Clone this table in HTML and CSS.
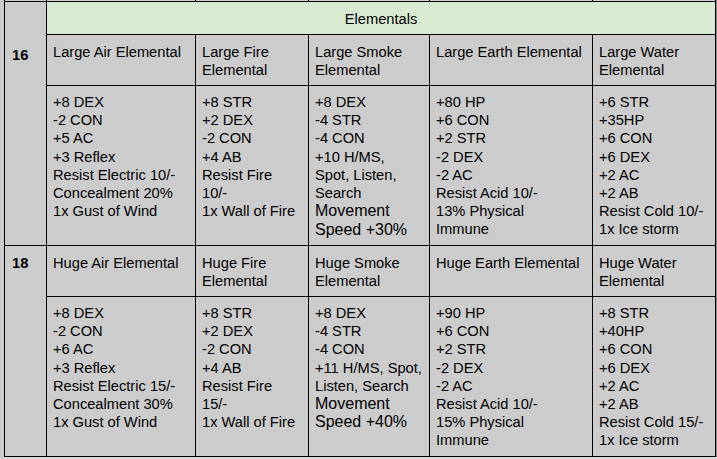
FILE: index.html
```html
<!DOCTYPE html>
<html>
<head>
<meta charset="utf-8">
<link rel="stylesheet" href="styles.css">
</head>
<body>
<div class="sheet">
  <div class="cell top c1"></div>
  <div class="cell top"></div>
  <div class="cell top"></div>
  <div class="cell top"></div>
  <div class="cell top"></div>
  <div class="cell top"></div>

  <div class="cell level lv16"><b>16</b></div>
  <div class="cell banner">Elementals</div>

  <div class="cell name">Large Air Elemental</div>
  <div class="cell name">Large Fire<br>Elemental</div>
  <div class="cell name">Large Smoke<br>Elemental</div>
  <div class="cell name">Large Earth Elemental</div>
  <div class="cell name">Large Water<br>Elemental</div>

  <div class="cell stats">+8 DEX<br>-2 CON<br>+5 AC<br>+3 Reflex<br>Resist Electric 10/-<br>Concealment 20%<br>1x Gust of Wind</div>
  <div class="cell stats">+8 STR<br>+2 DEX<br>-2 CON<br>+4 AB<br>Resist Fire<br>10/-<br>1x Wall of Fire</div>
  <div class="cell stats">+8 DEX<br>-4 STR<br>-4 CON<br>+10 H/MS,<br>Spot, Listen,<br>Search<span class="big">Movement<br>Speed +30%</span></div>
  <div class="cell stats">+80 HP<br>+6 CON<br>+2 STR<br>-2 DEX<br>-2 AC<br>Resist Acid 10/-<br>13% Physical<br>Immune</div>
  <div class="cell stats">+6 STR<br>+35HP<br>+6 CON<br>+6 DEX<br>+2 AC<br>+2 AB<br>Resist Cold 10/-<br>1x Ice storm</div>

  <div class="cell level lv18"><b>18</b></div>
  <div class="cell name">Huge Air Elemental</div>
  <div class="cell name">Huge Fire<br>Elemental</div>
  <div class="cell name">Huge Smoke<br>Elemental</div>
  <div class="cell name">Huge Earth Elemental</div>
  <div class="cell name">Huge Water<br>Elemental</div>

  <div class="cell stats">+8 DEX<br>-2 CON<br>+6 AC<br>+3 Reflex<br>Resist Electric 15/-<br>Concealment 30%<br>1x Gust of Wind</div>
  <div class="cell stats">+8 STR<br>+2 DEX<br>-2 CON<br>+4 AB<br>Resist Fire<br>15/-<br>1x Wall of Fire</div>
  <div class="cell stats">+8 DEX<br>-4 STR<br>-4 CON<br>+11 H/MS, Spot,<br>Listen, Search<span class="big">Movement<br>Speed +40%</span></div>
  <div class="cell stats">+90 HP<br>+6 CON<br>+2 STR<br>-2 DEX<br>-2 AC<br>Resist Acid 10/-<br>15% Physical<br>Immune</div>
  <div class="cell stats">+8 STR<br>+40HP<br>+6 CON<br>+6 DEX<br>+2 AC<br>+2 AB<br>Resist Cold 15/-<br>1x Ice storm</div>
</div>
</body>
</html>
```
FILE: styles.css
```css
html, body {
  margin: 0;
  padding: 0;
  background: #cccccc;
}
body {
  font-family: "Liberation Sans", Arial, sans-serif;
  font-size: 14.67px;
  line-height: 18.2px;
  color: #000;
  height: 459px;
  overflow: hidden;
}
.sheet {
  margin-left: 4px;
  width: 711px;
  display: grid;
  grid-template-columns: 41px 148px 112px 120px 162px 122px;
  grid-template-rows: 1px 32px 50px 159px 50px 159px;
  gap: 1px;
  padding: 0 0 1px 1px;
  background: #000;
  border-right: 1px solid #8a8a8a;
  box-shadow: 0 2px 0 #dcdcdc;
}
.cell {
  background: #cccccc;
  padding: 0 6px;
  white-space: nowrap;
}
.top { padding: 0; }
.level {
  grid-row: span 3;
  padding-left: 7px;
  font-weight: bold;
}
.lv16 { grid-row: 2 / span 3; padding-top: 44px; }
.lv18 { grid-row: 5 / span 2; padding-top: 8px; }
.banner {
  grid-column: 2 / span 5;
  background: #d9ead3;
  text-align: center;
  padding-top: 8px;
}
.name { padding-top: 8px; }
.stats { padding-top: 7px; }
.big {
  display: block;
  font-size: 16px;
  line-height: 18.4px;
}
```
